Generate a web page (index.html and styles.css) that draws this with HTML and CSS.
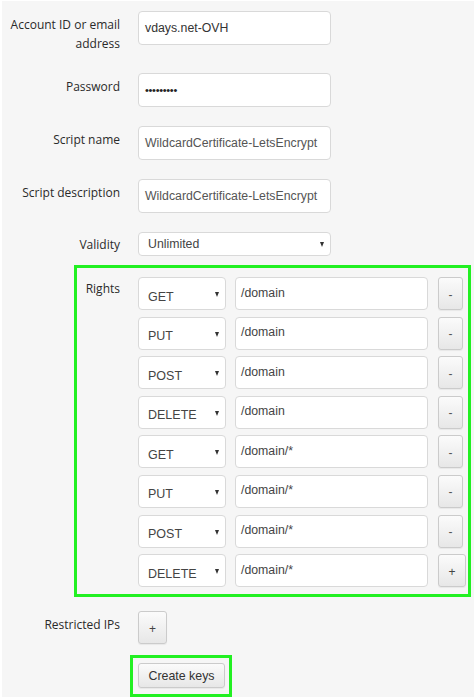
FILE: index.html
```html
<!DOCTYPE html>
<html>
<head>
<meta charset="utf-8">
<link rel="stylesheet" href="styles.css">
</head>
<body>
<div class="page">
  <div class="row row-acct">
    <div class="lbl">Account ID or email<br>address</div>
    <div class="field text-dark">vdays.net-OVH</div>
  </div>
  <div class="row">
    <div class="lbl">Password</div>
    <div class="field"><span class="dots">•••••••••</span></div>
  </div>
  <div class="row">
    <div class="lbl">Script name</div>
    <div class="field">WildcardCertificate-LetsEncrypt</div>
  </div>
  <div class="row">
    <div class="lbl">Script description</div>
    <div class="field">WildcardCertificate-LetsEncrypt</div>
  </div>
  <div class="row row-validity">
    <div class="lbl lbl-validity">Validity</div>
    <div class="field field-select"><span>Unlimited</span><span class="caret"></span></div>
  </div>

  <div class="rights-box">
    <div class="lbl lbl-rights">Rights</div>
    <div class="rights-list">
      <div class="right-row"><div class="method">GET<span class="caret"></span></div><div class="path">/domain</div><div class="btn btn-sm">-</div></div>
      <div class="right-row"><div class="method">PUT<span class="caret"></span></div><div class="path">/domain</div><div class="btn btn-sm">-</div></div>
      <div class="right-row"><div class="method">POST<span class="caret"></span></div><div class="path">/domain</div><div class="btn btn-sm">-</div></div>
      <div class="right-row"><div class="method">DELETE<span class="caret"></span></div><div class="path">/domain</div><div class="btn btn-sm">-</div></div>
      <div class="right-row"><div class="method">GET<span class="caret"></span></div><div class="path">/domain/*</div><div class="btn btn-sm">-</div></div>
      <div class="right-row"><div class="method">PUT<span class="caret"></span></div><div class="path">/domain/*</div><div class="btn btn-sm">-</div></div>
      <div class="right-row"><div class="method">POST<span class="caret"></span></div><div class="path">/domain/*</div><div class="btn btn-sm">-</div></div>
      <div class="right-row"><div class="method">DELETE<span class="caret"></span></div><div class="path">/domain/*</div><div class="btn btn-sm btn-plus">+</div></div>
    </div>
  </div>

  <div class="row row-ips">
    <div class="lbl">Restricted IPs</div>
    <div class="btn btn-ip">+</div>
  </div>

  <div class="create-box">
    <div class="btn btn-create">Create keys</div>
  </div>
</div>
</body>
</html>
```

FILE: styles.css
```css
html, body {
  margin: 0;
  padding: 0;
  background: #ffffff;
}

.page {
  margin: 1px 0 0 2px;
  width: 472px;
  height: 696px;
  box-sizing: border-box;
  padding-top: 10px;
  background: #f6f6f6;
  overflow: hidden;
  font-family: "Liberation Sans", Arial, sans-serif;
  color: #333;
}

.row {
  display: flex;
  gap: 18px;
  margin-bottom: 19px;
  align-items: flex-start;
}

.row-acct {
  margin-bottom: 20px;
}

.lbl {
  width: 118px;
  flex: none;
  text-align: right;
  font-family: "Open Sans", "DejaVu Sans", sans-serif;
  font-size: 12px;
  line-height: 19px;
  padding-top: 4px;
  color: #2a2a2a;
}

.lbl-validity {
  padding-top: 3px;
}

.field {
  width: 193px;
  height: 34px;
  box-sizing: border-box;
  background: #fff;
  border: 1px solid #d9d9d9;
  border-radius: 4px;
  display: flex;
  align-items: center;
  padding: 0 6px;
  font-size: 12.3px;
  color: #555;
  white-space: nowrap;
}

.text-dark {
  color: #333;
}

.dots {
  font-size: 11px;
  color: #222;
  letter-spacing: -0.3px;
}

.row-validity {
  margin-bottom: 9px;
}

.field-select {
  height: 24px;
  padding-left: 9px;
  justify-content: space-between;
  padding-right: 6px;
  color: #444;
}

.caret {
  width: 0;
  height: 0;
  border-left: 2.5px solid transparent;
  border-right: 2.5px solid transparent;
  border-top: 5px solid #333;
  flex: none;
}

.rights-box {
  margin-left: 72px;
  width: 397px;
  box-sizing: border-box;
  border: 3px solid #22f022;
  padding: 9px 0 7px 0;
  display: flex;
  gap: 18px;
  align-items: flex-start;
}

.lbl-rights {
  width: 43px;
  padding-top: 2px;
}

.rights-list {
  display: flex;
  flex-direction: column;
  gap: 6.6px;
}

.right-row {
  display: flex;
  align-items: stretch;
  height: 33px;
}

.method {
  width: 88px;
  margin-right: 9px;
  box-sizing: border-box;
  background: #fff;
  border: 1px solid #d9d9d9;
  border-radius: 4px;
  padding: 6px 6px 0 9px;
  display: flex;
  align-items: center;
  justify-content: space-between;
  font-size: 12.5px;
  color: #444;
  position: relative;
}

.method .caret {
  position: absolute;
  right: 6px;
  top: 14px;
}

.path {
  width: 193px;
  margin-right: 10px;
  box-sizing: border-box;
  background: #fff;
  border: 1px solid #d9d9d9;
  border-radius: 4px;
  padding: 0 5px 2px 5px;
  display: flex;
  align-items: center;
  font-size: 12.3px;
  color: #444;
}

.btn {
  box-sizing: border-box;
  background: linear-gradient(#fbfbfb, #e7e7e7);
  border: 1px solid #cbcbcb;
  border-radius: 3px;
  display: flex;
  align-items: center;
  justify-content: center;
  font-size: 12px;
  color: #555;
  box-shadow: 0 1px 1px rgba(0,0,0,0.06);
}

.btn-sm {
  width: 25px;
  padding-top: 2px;
}

.btn-plus {
  width: 28px;
  color: #444;
}

.row-ips {
  margin-top: 14px;
  margin-bottom: 0;
}

.btn-ip {
  width: 29px;
  height: 33px;
  padding-top: 2px;
  color: #444;
}

.create-box {
  margin: 11px 0 0 128px;
  width: 102px;
  box-sizing: border-box;
  border: 3px solid #22f022;
  padding: 5px 4px 6px 5px;
}

.btn-create {
  width: 87px;
  height: 25px;
  font-size: 12.4px;
  color: #333;
}
```
